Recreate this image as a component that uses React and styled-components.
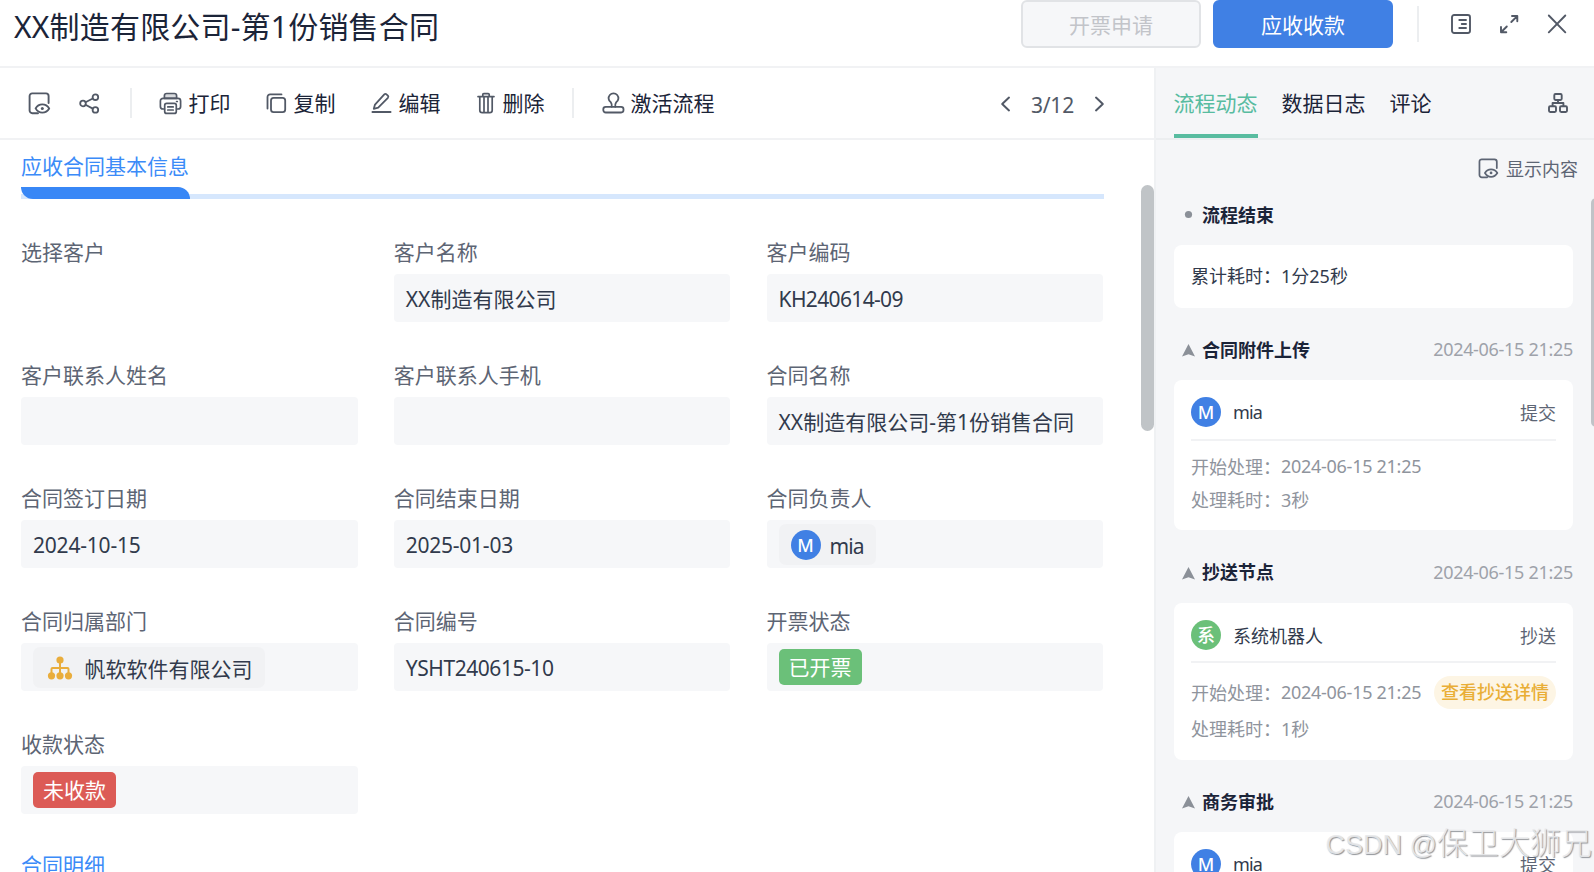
import React from "react";
import styled, { createGlobalStyle, css } from "styled-components";

const color = {
  ink: "#1b2438",
  text: "#313a4c",
  label: "#5d6574",
  icon: "#525966",
  muted: "#8f949d",
  faint: "#9ea2aa",
  line: "#f1f2f4",
  field: "#f6f7f9",
  blue: "#4080e4",
  green: "#6bc079",
  red: "#dc5b56",
};

const GlobalStyle = createGlobalStyle`
  * { box-sizing: border-box; }
  body {
    margin: 0;
    overflow: hidden;
    background: #fff;
    font-family: "Noto Sans", "Noto Sans CJK SC", sans-serif;
    font-size: 21px;
    color: ${color.text};
  }
  svg { display: block; flex: none; }
`;

const Page = styled.div`
  display: flex;
  flex-direction: column;
  width: 1594px;
  height: 872px;
  overflow: hidden;
  position: relative;
`;

const Header = styled.header`
  flex: none;
  display: flex;
  align-items: flex-start;
  height: 68px;
  padding-left: 14px;
  padding-right: 27px;
  border-bottom: 2px solid ${color.line};
`;

const Title = styled.h1`
  flex: 1;
  margin: 0;
  font-size: 30px;
  font-weight: 400;
  line-height: 53px;
  letter-spacing: 0.2px;
  color: ${color.ink};
`;

const HeaderButton = styled.button`
  width: 180px;
  height: 48px;
  margin: 0 0 0 ${(p) => (p.$primary ? 12 : 0)}px;
  padding: 1px 0 0;
  border: 2px solid ${(p) => (p.$primary ? color.blue : "#e1e3e6")};
  border-radius: 6px;
  background: ${(p) => (p.$primary ? color.blue : "#f6f7f9")};
  color: ${(p) => (p.$primary ? "#fff" : "#c2c4c9")};
  font: inherit;
  line-height: 40px;
`;

const Divider = styled.span`
  width: 2px;
  height: ${(p) => p.$h}px;
  background: #eceef0;
`;

const WindowTools = styled.div`
  display: flex;
  align-items: center;
  height: 48px;
  padding-left: 24px;
  color: ${color.icon};
  & > svg:nth-of-type(1) { margin-left: 32px; }
  & > svg:nth-of-type(2) { margin-left: 28px; }
  & > svg:nth-of-type(3) { margin-left: 28px; }
`;

const Body = styled.div`
  flex: 1;
  min-height: 0;
  display: flex;
`;

const Main = styled.main`
  width: 1154px;
  display: flex;
  flex-direction: column;
`;

const barBase = css`
  flex: none;
  display: flex;
  align-items: center;
  height: 72px;
  border-bottom: 2px solid ${color.line};
`;

const Toolbar = styled.div`
  ${barBase}
  padding: 0 49px 0 28px;
  color: ${color.icon};
`;

const IconPair = styled.div`
  display: flex;
  align-items: center;
  gap: 28px;
  margin-right: 30px;
`;

const Action = styled.div`
  display: flex;
  align-items: center;
  gap: ${(p) => p.$inner || 7}px;
  margin-left: ${(p) => p.$gap}px;
  line-height: 30px;
  & > span { color: ${color.ink}; }
`;

const Pager = styled.div`
  display: flex;
  align-items: center;
  margin-left: auto;
  gap: 20px;
  line-height: 30px;
  & > svg { margin-top: 1px; }
  & > span { padding-top: 4px; letter-spacing: -0.2px; }
`;

const Content = styled.div`
  flex: 1;
  min-height: 0;
  overflow: hidden;
  display: flex;
  justify-content: space-between;
`;

const Form = styled.div`
  width: 1104px;
  padding-left: 21px;
`;

const SectionTitle = styled.div`
  margin-top: ${(p) => p.$top || 0}px;
  line-height: 30px;
  color: #3b8bf8;
`;

const Track = styled.div`
  display: flex;
  height: 12px;
  margin-top: 6px;
  background: linear-gradient(transparent 6.5px, #d6e7fd 6.5px, #d6e7fd 11.5px, transparent 11.5px);
`;

const TrackTab = styled.div`
  width: 169px;
  height: 12px;
  border-radius: 0 12px 0 12px;
  background: #3887f6;
`;

const Fields = styled.div`
  display: grid;
  grid-template-columns: repeat(3, 336.6px);
  column-gap: 36.2px;
  grid-auto-rows: 122.9px;
  margin-top: 37px;
`;

const Label = styled.div`
  height: 38px;
  line-height: 33px;
  color: ${color.label};
`;

const Value = styled.div`
  display: flex;
  align-items: center;
  height: 48px;
  padding: 2px 12px 0;
  border-radius: 4px;
  background: ${color.field};
  letter-spacing: ${(p) => p.$tracking || 0}px;
  line-height: 30px;
`;

const Chip = styled.div`
  display: flex;
  align-items: center;
  height: 41px;
  padding: 0 12px;
  border-radius: 7px;
  background: #f1f2f4;
  gap: ${(p) => p.$gap || 9}px;
  & > span { padding-top: 2px; }
`;

const Tag = styled.div`
  height: 36px;
  margin-top: -2px;
  padding: 0 10px;
  border-radius: 5px;
  background: ${(p) => p.$bg};
  color: #fff;
  line-height: 37px;
`;

const Avatar = styled.i`
  flex: none;
  width: 30px;
  height: 30px;
  border-radius: 50%;
  background: ${(p) => p.$bg || color.blue};
  color: #fff;
  font-size: 18px;
  font-style: normal;
  font-weight: 500;
  line-height: 30px;
  letter-spacing: 0;
  text-align: center;
`;

const Name = styled.span`
  letter-spacing: ${(p) => (p.$latin ? "-0.9px" : "0")};
`;

const Thumb = styled.div`
  width: 13px;
  height: 246px;
  margin-top: 45px;
  border-radius: 7px;
  background: #c0c4c7;
`;

const Side = styled.aside`
  flex: 1;
  display: flex;
  flex-direction: column;
  border-left: 2px solid #eff1f3;
  background: #f5f6f8;
  font-size: 18px;
  overflow: hidden;
  position: relative;
`;

const Tabs = styled.nav`
  ${barBase}
  padding: 0 26px 0 17.5px;
  border-color: #eceef0;
  font-size: 21px;
  gap: 24px;
  color: ${color.icon};
  & > svg { margin-left: auto; }
`;

const Tab = styled.div`
  height: 70px;
  line-height: 71px;
  color: ${(p) => (p.$active ? "#58bca0" : color.ink)};
  border-bottom: 4px solid ${(p) => (p.$active ? "#58bca0" : "transparent")};
`;

const ShowContent = styled.div`
  flex: none;
  display: flex;
  justify-content: flex-end;
  align-items: center;
  height: 45px;
  padding: 12px 16px 0 0;
  gap: 7px;
  color: ${color.label};
  & > span { margin-top: -2px; }
`;

const StepHead = styled.div`
  flex: none;
  display: flex;
  align-items: center;
  height: ${(p) => (p.$first ? 59.5 : 72.5)}px;
  padding: ${(p) => (p.$first ? 2 : 14)}px 21px 0 26px;
  gap: 7px;
  & > b { margin-top: -4px; font-weight: 700; color: ${color.ink}; }
`;

const Time = styled.time`
  margin: -3px 0 0 auto;
  letter-spacing: -0.3px;
  color: ${color.faint};
`;

const Card = styled.section`
  flex: none;
  width: 399px;
  height: ${(p) => p.$h}px;
  margin-left: 18px;
  padding: 0 17px;
  border-radius: 8px;
  background: #fff;
  line-height: ${(p) => (p.$plain ? "63px" : "normal")};
`;

const Person = styled.div`
  display: flex;
  align-items: center;
  height: 60.5px;
  padding-top: 6px;
  border-bottom: 2px solid ${color.line};
  gap: 12px;
  & > span:last-child { margin-left: auto; color: ${color.label}; }
`;

const Detail = styled.div`
  display: flex;
  align-items: center;
  height: ${(p) => p.$h}px;
  margin-top: ${(p) => p.$top || 0}px;
  color: ${color.muted};
  white-space: nowrap;
  & > span:nth-child(2) { letter-spacing: -0.28px; }
`;

const Pill = styled.span`
  height: 33px;
  margin: 1px 0 0 auto;
  padding: 1px 7px 0;
  border-radius: 17px;
  background: #fdf5e4;
  color: #e9ae36;
  font-weight: 500;
  line-height: 31px;
`;

const SideThumb = styled.div`
  position: absolute;
  top: 130px;
  right: -7px;
  width: 10px;
  height: 229px;
  border-radius: 5px;
  background: #c0c3c7;
`;

const Watermark = styled.div`
  position: absolute;
  right: 2px;
  bottom: 4px;
  font-family: "Liberation Sans", "Noto Sans CJK SC", sans-serif;
  font-size: 31px;
  font-weight: 300;
  line-height: 46px;
  color: rgba(232, 233, 235, 0.92);
  text-shadow: 1px 1px 1px rgba(110, 114, 120, 0.75);
  white-space: nowrap;
  & > span { font-size: 27px; }
`;

const Svg = ({ w = 22, h = 22, vb, sw = 1.8, children }) => (
  <svg width={w} height={h} viewBox={vb || `0 0 ${w} ${h}`} fill="none" stroke="currentColor"
    strokeWidth={sw} strokeLinecap="round" strokeLinejoin="round">{children}</svg>
);

const EyePage = ({ s = 23 }) => (
  <Svg w={s} h={s} vb="0 0 23 23" sw={1.9}>
    <path d="M10 21.2H4.2A2.6 2.6 0 0 1 1.6 18.6V4A2.6 2.6 0 0 1 4.2 1.4H18A2.6 2.6 0 0 1 20.6 4V11" />
    <path d="M7.6 16.4C9.3 13.5 11.5 12.4 14.3 12.4S19.4 13.5 21.2 16.4C19.4 19.4 17 20.6 14.3 20.6S9.3 19.4 7.6 16.4Z" />
    <circle cx="14.3" cy="16.4" r="1.5" fill="currentColor" stroke="none" />
  </Svg>
);
const Share = () => (
  <Svg w={21} h={21}>
    <circle cx="4" cy="10.5" r="2.8" /><circle cx="16.4" cy="4.2" r="2.8" /><circle cx="16.4" cy="16.9" r="2.8" />
    <path d="M6.5 9.2 13.8 5.5M6.5 11.8 13.8 15.6" />
  </Svg>
);
const Printer = () => (
  <Svg w={23} h={23} sw={1.7}>
    <path d="M5.4 6.4V3.8Q5.4 1.5 7.7 1.5H15.3Q17.6 1.5 17.6 3.8V6.4Z" fill="#d9dbde" />
    <path d="M5.4 17H4A2.6 2.6 0 0 1 1.4 14.4V9A2.6 2.6 0 0 1 4 6.4H19A2.6 2.6 0 0 1 21.6 9V14.4A2.6 2.6 0 0 1 19 17H17.6" />
    <rect x="5.7" y="11.4" width="11.6" height="10" rx="2" />
    <path d="M8.8 14.9H14.2M8.8 18H14.2M17.6 9.5H18.3" />
  </Svg>
);
const Copy = () => (
  <Svg w={21} h={21}>
    <rect x="5" y="4.8" width="14.2" height="14.4" rx="2.6" />
    <path d="M1.5 15.5V4A2.6 2.6 0 0 1 4.1 1.4H15.5" />
  </Svg>
);
const Pencil = () => (
  <Svg w={21} h={22}>
    <path d="M2.8 16.8 4 12.6 13.3 2.3Q14.3 1.4 15.4 2.3L16.9 3.7Q17.8 4.7 16.9 5.8L7.2 15.7Z" />
    <path d="M1.4 20H19.6" />
  </Svg>
);
const Trash = () => (
  <Svg w={18} h={22} sw={1.7}>
    <path d="M1 4.6H17M5.8 4.4V2.6Q5.8 1.6 6.8 1.6H11.2Q12.2 1.6 12.2 2.6V4.4M2.8 4.8V18.2Q2.8 20.6 5.2 20.6H12.8Q15.2 20.6 15.2 18.2V4.8M7 5V20M11 5V20" />
  </Svg>
);
const Stamp = () => (
  <Svg w={23} h={23}>
    <path d="M9.7 14.8Q10.2 12.4 8.8 10.3A4.9 4.9 0 1 1 14.2 10.3Q12.8 12.4 13.3 14.8" />
    <rect x="1.3" y="14.9" width="20.2" height="5.6" rx="2.4" />
  </Svg>
);
const Chevron = ({ right }) => (
  <Svg w={11} h={16} sw={2}>
    <path d={right ? "M2 1.6 8.8 8 2 14.4" : "M9 1.6 2.2 8 9 14.4"} />
  </Svg>
);
const PageList = () => (
  <Svg w={20} h={20} sw={1.9}>
    <rect x="1" y="1" width="18" height="18" rx="2.2" />
    <path d="M8.3 6H15M10.8 10H15M8.3 14H15" />
  </Svg>
);
const Expand = () => (
  <Svg w={20} h={20} sw={1.9}>
    <path d="M13 2H18.3V7.3M18 2.3 12.3 8M2 13V18.2H7.3M2.3 18 7.8 12.5" />
  </Svg>
);
const Close = () => (
  <Svg w={20} h={20} sw={1.9}><path d="M1.8 1.5 18.3 18.3M18.3 1.5 1.8 18.3" /></Svg>
);
const OrgChart = () => (
  <Svg w={20} h={20} sw={1.9}>
    <rect x="6.3" y="1" width="7.4" height="6" rx="1.2" />
    <rect x="1" y="13.2" width="7" height="5.8" rx="1.2" />
    <rect x="12" y="13.2" width="7" height="5.8" rx="1.2" />
    <path d="M10 7V10M4.6 13V10H15.4V13" />
  </Svg>
);
const Department = () => (
  <svg width="28" height="24" viewBox="-2 0 28 24" fill="#e9ad3c">
    <circle cx="13" cy="4" r="3.6" />
    <circle cx="4.5" cy="19.8" r="3.6" /><circle cx="13" cy="19.8" r="3.6" /><circle cx="21.5" cy="19.8" r="3.6" />
    <path d="M13 5V19M4.5 19V13Q4.5 12 5.5 12H20.5Q21.5 12 21.5 13V19" fill="none" stroke="#e9ad3c" strokeWidth="2" />
  </svg>
);
const Arrow = () => (
  <svg width="13" height="13" viewBox="0 0 13 13" fill="#8b9098"><path d="M6.5 0 13 12.6 6.5 10.2 0 12.6Z" /></svg>
);
const Dot = () => (
  <svg width="13" height="13" viewBox="0 0 13 13" fill="#8b9098"><circle cx="6.5" cy="5.5" r="3.6" /></svg>
);

const Field = ({ label, children, tracking, empty }) => (
  <div>
    <Label>{label}</Label>
    {!empty && <Value $tracking={tracking}>{children}</Value>}
  </div>
);

const Step = ({ title, time, height, first, plain, children }) => (
  <>
    <StepHead $first={first}>
      {first ? <Dot /> : <Arrow />}
      <b>{title}</b>
      {time && <Time>{time}</Time>}
    </StepHead>
    <Card $h={height} $plain={plain}>{children}</Card>
  </>
);

const stamp = "2024-06-15 21:25";

export default function App() {
  return (
    <Page>
      <GlobalStyle />
      <Header>
        <Title>XX制造有限公司-第1份销售合同</Title>
        <HeaderButton disabled>开票申请</HeaderButton>
        <HeaderButton $primary>应收收款</HeaderButton>
        <WindowTools>
          <Divider $h={36} />
          <PageList />
          <Expand />
          <Close />
        </WindowTools>
      </Header>
      <Body>
        <Main>
          <Toolbar>
            <IconPair><EyePage /><Share /></IconPair>
            <Divider $h={30} />
            <Action $gap={27} $inner={6.5}><Printer /><span>打印</span></Action>
            <Action $gap={35}><Copy /><span>复制</span></Action>
            <Action $gap={35}><Pencil /><span>编辑</span></Action>
            <Action $gap={36} $inner={8}><Trash /><span>删除</span></Action>
            <Action $gap={27}><Divider $h={30} /></Action>
            <Action $gap={28} $inner={6}><Stamp /><span>激活流程</span></Action>
            <Pager><Chevron /><span>3/12</span><Chevron right /></Pager>
          </Toolbar>
          <Content>
            <Form>
              <SectionTitle $top={11}>应收合同基本信息</SectionTitle>
              <Track><TrackTab /></Track>
              <Fields>
                <Field label="选择客户" empty />
                <Field label="客户名称">XX制造有限公司</Field>
                <Field label="客户编码" tracking={-0.65}>KH240614-09</Field>
                <Field label="客户联系人姓名" />
                <Field label="客户联系人手机" />
                <Field label="合同名称">XX制造有限公司-第1份销售合同</Field>
                <Field label="合同签订日期" tracking={-0.2}>2024-10-15</Field>
                <Field label="合同结束日期" tracking={-0.25}>2025-01-03</Field>
                <Field label="合同负责人"><Chip><Avatar>M</Avatar><Name $latin>mia</Name></Chip></Field>
                <Field label="合同归属部门"><Chip $gap={11.5}><Department /><span>帆软软件有限公司</span></Chip></Field>
                <Field label="合同编号" tracking={-0.45}>YSHT240615-10</Field>
                <Field label="开票状态"><Tag $bg={color.green}>已开票</Tag></Field>
                <Field label="收款状态"><Tag $bg={color.red}>未收款</Tag></Field>
              </Fields>
              <SectionTitle>合同明细</SectionTitle>
            </Form>
            <Thumb />
          </Content>
        </Main>
        <Side>
          <Tabs>
            <Tab $active>流程动态</Tab>
            <Tab>数据日志</Tab>
            <Tab>评论</Tab>
            <OrgChart />
          </Tabs>
          <ShowContent><EyePage s={21} /><span>显示内容</span></ShowContent>
          <Step first plain title="流程结束" height={63}>累计耗时：1分25秒</Step>
          <Step title="合同附件上传" time={stamp} height={150}>
            <Person><Avatar>M</Avatar><Name $latin>mia</Name><span>提交</span></Person>
            <Detail $h={33} $top={9}><span>开始处理：</span><span>{stamp}</span></Detail>
            <Detail $h={33}>处理耗时：3秒</Detail>
          </Step>
          <Step title="抄送节点" time={stamp} height={157}>
            <Person><Avatar $bg={color.green}>系</Avatar><Name>系统机器人</Name><span>抄送</span></Person>
            <Detail $h={33} $top={12}><span>开始处理：</span><span>{stamp}</span><Pill>查看抄送详情</Pill></Detail>
            <Detail $h={36} $top={2}>处理耗时：1秒</Detail>
          </Step>
          <Step title="商务审批" time={stamp} height={150}>
            <Person><Avatar>M</Avatar><Name $latin>mia</Name><span>提交</span></Person>
          </Step>
          <SideThumb />
        </Side>
      </Body>
      <Watermark><span>CSDN @</span>保卫大狮兄</Watermark>
    </Page>
  );
}
